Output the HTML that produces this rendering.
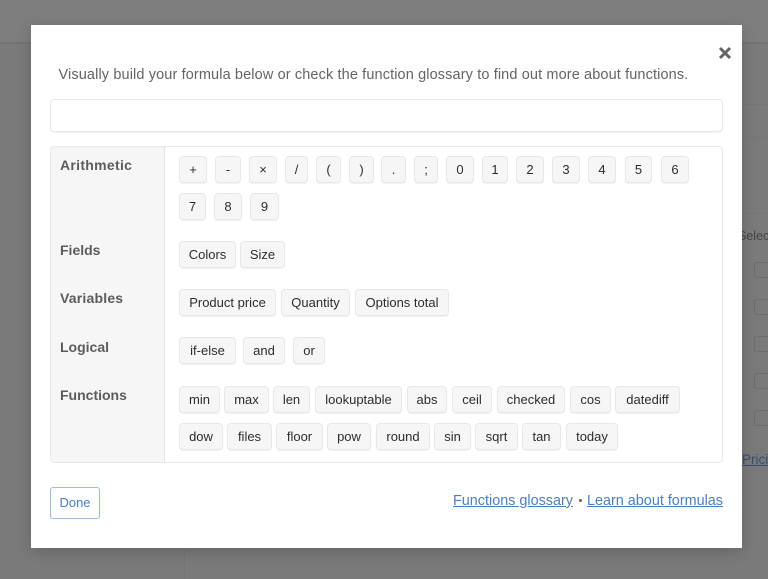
<!DOCTYPE html>
<html><head><meta charset="utf-8"><style>
html,body{margin:0;padding:0}
body{width:768px;height:579px;position:relative;overflow:hidden;background:#7a7a7a;font-family:"Liberation Sans",sans-serif}
div,a,span{position:absolute;box-sizing:border-box}
.b{height:27px;background:#f6f6f6;border:1px solid #e8e8e8;border-radius:4px;box-shadow:0 1px 1px rgba(0,0,0,.06);color:#2c2c2c;font-size:13px;line-height:25px;text-align:center;white-space:nowrap}
.l{left:60px;font-weight:bold;font-size:14px;color:#5c5c5c;line-height:18px;white-space:nowrap}
a{color:#4a7fc1;text-decoration:underline;font-size:14.4px;line-height:18px;white-space:nowrap}
.c{left:754px;width:20px;height:16px;border:1px solid #6c6c6c;border-radius:3px}
.r{left:742px;width:26px;height:1px;background:#767676}
</style></head><body>
<div style="left:0;top:0;width:768px;height:42px;background:#7e7e7e"></div>
<div style="left:0;top:42px;width:768px;height:2px;background:#747474"></div>
<div class="r" style="top:104px"></div>
<div class="r" style="top:137px"></div>
<div class="r" style="top:213px"></div>
<div style="left:738px;top:229px;font-size:12.5px;line-height:14px;color:#454545;white-space:nowrap">Select</div>
<div class="c" style="top:262px"></div>
<div class="c" style="top:299px"></div>
<div class="c" style="top:336px"></div>
<div class="c" style="top:373px"></div>
<div class="c" style="top:410px"></div>
<div style="left:742px;top:452px;font-size:13.5px;line-height:15px;color:#354e6c;text-decoration:underline;white-space:nowrap">Prici</div>
<div style="left:184px;top:548px;width:1px;height:31px;background:#757575"></div>

<div style="left:31px;top:25px;width:711px;height:523px;background:#fff;box-shadow:0 3px 14px rgba(0,0,0,.18)"></div>
<svg style="position:absolute;left:718px;top:46px" width="14" height="14" viewBox="0 0 14 14"><path d="M2 2 L12 12 M12 2 L2 12" stroke="#666" stroke-width="3" fill="none"/></svg>
<div style="left:58.5px;top:66px;font-size:14.5px;line-height:18px;color:#646464;white-space:nowrap;letter-spacing:.122px">Visually build your formula below or check the function glossary to find out more about functions.</div>
<div style="left:50px;top:99px;width:673px;height:33px;background:#fff;border:1px solid #e8e8e8;border-radius:4px;box-shadow:0 1px 1px rgba(0,0,0,.04)"></div>
<div style="left:50px;top:146px;width:673px;height:317px;background:#fff;border:1px solid #e8e8e8;border-radius:4px"></div>
<div style="left:51px;top:147px;width:114px;height:315px;background:#f6f6f6;border-right:1px solid #e2e4e8;border-radius:3px 0 0 3px"></div>

<div class="l" style="top:156px;letter-spacing:.3px">Arithmetic</div>
<div class="l" style="top:241px">Fields</div>
<div class="l" style="top:289px;letter-spacing:.2px">Variables</div>
<div class="l" style="top:338px">Logical</div>
<div class="l" style="top:386px">Functions</div>

<div class="b" style="left:179px;top:156px;width:28px">+</div>
<div class="b" style="left:215px;top:156px;width:26px">-</div>
<div class="b" style="left:249px;top:156px;width:28px">×</div>
<div class="b" style="left:285px;top:156px;width:23px">/</div>
<div class="b" style="left:316px;top:156px;width:25px">(</div>
<div class="b" style="left:349px;top:156px;width:25px">)</div>
<div class="b" style="left:381px;top:156px;width:25px">.</div>
<div class="b" style="left:414px;top:156px;width:24px">;</div>
<div class="b" style="left:446px;top:156px;width:28px">0</div>
<div class="b" style="left:482px;top:156px;width:26px">1</div>
<div class="b" style="left:516px;top:156px;width:28px">2</div>
<div class="b" style="left:552px;top:156px;width:28px">3</div>
<div class="b" style="left:588px;top:156px;width:28px">4</div>
<div class="b" style="left:625px;top:156px;width:27px">5</div>
<div class="b" style="left:661px;top:156px;width:28px">6</div>
<div class="b" style="left:179px;top:193px;width:27px">7</div>
<div class="b" style="left:214px;top:193px;width:28px">8</div>
<div class="b" style="left:250px;top:193px;width:29px">9</div>

<div class="b" style="left:179px;top:241px;width:57px">Colors</div>
<div class="b" style="left:240px;top:241px;width:45px">Size</div>

<div class="b" style="left:179px;top:289px;width:97px">Product price</div>
<div class="b" style="left:281px;top:289px;width:69px">Quantity</div>
<div class="b" style="left:355px;top:289px;width:94px">Options total</div>

<div class="b" style="left:179px;top:337px;width:57px">if-else</div>
<div class="b" style="left:243px;top:337px;width:42px">and</div>
<div class="b" style="left:293px;top:337px;width:32px">or</div>

<div class="b" style="left:179px;top:386px;width:41px">min</div>
<div class="b" style="left:224px;top:386px;width:45px">max</div>
<div class="b" style="left:273px;top:386px;width:37px">len</div>
<div class="b" style="left:315px;top:386px;width:87px">lookuptable</div>
<div class="b" style="left:407px;top:386px;width:40px">abs</div>
<div class="b" style="left:452px;top:386px;width:40px">ceil</div>
<div class="b" style="left:497px;top:386px;width:68px">checked</div>
<div class="b" style="left:570px;top:386px;width:41px">cos</div>
<div class="b" style="left:615px;top:386px;width:65px">datediff</div>

<div class="b" style="left:179px;top:423px;width:44px">dow</div>
<div class="b" style="left:227px;top:423px;width:45px">files</div>
<div class="b" style="left:276px;top:423px;width:47px">floor</div>
<div class="b" style="left:327px;top:423px;width:44px">pow</div>
<div class="b" style="left:376px;top:423px;width:54px">round</div>
<div class="b" style="left:434px;top:423px;width:37px">sin</div>
<div class="b" style="left:475px;top:423px;width:43px">sqrt</div>
<div class="b" style="left:522px;top:423px;width:39px">tan</div>
<div class="b" style="left:566px;top:423px;width:52px">today</div>

<div style="left:50px;top:487px;width:50px;height:32px;background:#fff;border:1px solid #9dbce0;border-radius:3px;color:#4a7fc1;font-size:13px;line-height:30px;text-align:center">Done</div>
<a style="left:453px;top:492px">Functions glossary</a>
<div style="left:579px;top:499px;width:3px;height:3px;border-radius:50%;background:#5f5f5f"></div>
<a style="left:587px;top:492px">Learn about formulas</a>
</body></html>
